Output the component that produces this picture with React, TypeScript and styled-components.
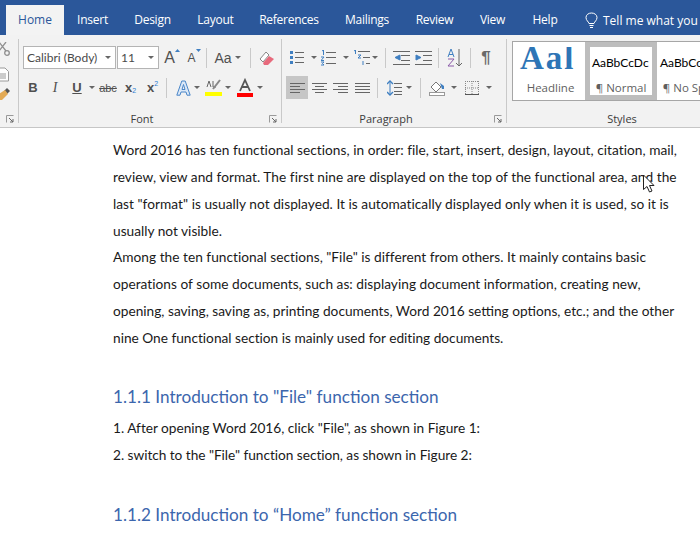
import React from "react";
import styled, { createGlobalStyle } from "styled-components";

const Global = createGlobalStyle`
  html, body { margin: 0; padding: 0; background: #fff; }
  body { width: 700px; height: 540px; overflow: hidden; font-family: "Open Sans", "Liberation Sans", sans-serif; }
`;

const Page = styled.div`
  position: relative; width: 700px; height: 540px; overflow: hidden; background: #fff;
`;
const TabBar = styled.div`
  display: flex; align-items: flex-end; height: 35px; background: #2b579a; padding-left: 6px; box-sizing: border-box;
`;
const Tab = styled.div<{ $active?: boolean; $w: number }>`
  flex: none; width: ${p => p.$w}px; height: 30px; line-height: 30px; text-align: center; white-space: nowrap;
  font-size: 12px; letter-spacing: ${p => (p.$active ? 0 : -0.25)}px; color: ${p => (p.$active ? "#2b579a" : "#fff")};
  background: ${p => (p.$active ? "#f3f3f3" : "transparent")};
`;
const TellMe = styled.div`
  flex: none; display: flex; align-items: center; gap: 5px; height: 30px; margin-left: 14px;
  font-size: 12px; color: #fff; white-space: nowrap;
`;
const Ribbon = styled.div`
  display: flex; height: 93px; background: #f2f2f2; border-bottom: 1px solid #c6c6c6; box-sizing: border-box; overflow: hidden;
`;
const Group = styled.div<{ $w: number; $last?: boolean; $pt?: number }>`
  position: relative; flex: none; display: flex; flex-direction: column; box-sizing: border-box;
  width: ${p => p.$w}px; margin: 4px 0; padding-top: ${p => p.$pt ?? 7}px; height: 84px;
  border-right: ${p => (p.$last ? "none" : "1px solid #c9c9c9")};
`;
const Row = styled.div<{ $h: number; $mt?: number }>`
  display: flex; align-items: center; height: ${p => p.$h}px; margin-top: ${p => p.$mt ?? 0}px;
`;
const GroupLabel = styled.div`
  position: absolute; left: 0; right: 16px; bottom: -3px; text-align: center; font-size: 11px; line-height: 15px; color: #3c3c3c;
`;
const Launcher = styled.svg`
  position: absolute; right: 4px; bottom: 0; width: 8px; height: 8px;
`;
const Combo = styled.div<{ $w: number; $ml: number }>`
  flex: none; position: relative; box-sizing: border-box; width: ${p => p.$w}px; height: 23px; margin-left: ${p => p.$ml}px;
  background: #fff; border: 1px solid #b4b4b4; font-family: "Lato", sans-serif; font-size: 12px; line-height: 21px;
  color: #4a4a4a; padding-left: 3px; white-space: nowrap;
`;
const ComboCaret = styled.span`
  position: absolute; right: 4px; top: 9px; width: 0; height: 0;
  border-left: 3px solid transparent; border-right: 3px solid transparent; border-top: 3px solid #666;
`;
const Tool = styled.div<{ $w: number; $ml?: number; $on?: boolean; $f?: string; $s?: number; $b?: boolean; $i?: boolean; $c?: string }>`
  flex: none; display: flex; align-items: center; justify-content: center; height: 23px;
  width: ${p => p.$w}px; margin-left: ${p => p.$ml ?? 0}px;
  background: ${p => (p.$on ? "#c6c6c6" : "transparent")};
  font-family: ${p => p.$f ?? '"Liberation Sans", sans-serif'}; font-size: ${p => p.$s ?? 12}px;
  font-weight: ${p => (p.$b ? 700 : 400)}; font-style: ${p => (p.$i ? "italic" : "normal")};
  color: ${p => p.$c ?? "#505050"}; white-space: nowrap; position: relative;
`;
const Under = styled.span`text-decoration: underline;`;
const Strike = styled.span`text-decoration: line-through;`;
const Script = styled.span<{ $up?: boolean }>`
  font-size: 7px; color: #2b7cd3; font-weight: 400; position: relative; top: ${p => (p.$up ? -4 : 3)}px;
`;
const SizeArrow = styled.svg`
  flex: none; width: 5px; height: 3px; margin-top: -14px;
`;
const Caret = styled.span<{ $ml: number }>`
  flex: none; width: 0; height: 0; margin-left: ${p => p.$ml}px;
  border-left: 3px solid transparent; border-right: 3px solid transparent; border-top: 3px solid #666;
`;
const Sep = styled.span<{ $ml: number }>`
  flex: none; width: 1px; height: 20px; background: #c9c9c9; margin-left: ${p => p.$ml}px;
`;
const Gallery = styled.div`
  display: flex; box-sizing: border-box; height: 60px; width: 230px; margin: 0 0 0 5px; padding-left: 3px;
  background: #fff; border: 1px solid #a6a6a6;
`;
const StyleCard = styled.div<{ $on?: boolean; $w: number }>`
  flex: none; display: flex; flex-direction: column; align-items: center; box-sizing: border-box; overflow: hidden;
  width: ${p => p.$w}px; margin-right: ${p => (p.$on ? 1 : 0)}px; height: 58px; padding-top: ${p => (p.$on ? 0 : 5)}px;
  border: ${p => (p.$on ? "5px solid #bdbdbd" : "none")};
`;
const Sample = styled.div<{ $big?: boolean }>`
  flex: none; height: 33px; line-height: ${p => (p.$big ? 22 : 32)}px; white-space: nowrap; overflow: hidden;
  width: ${p => (p.$big ? "62px" : "100%")}; align-self: flex-start; text-align: left;
  padding-left: ${p => (p.$big ? 4 : 2)}px; box-sizing: border-box;
  font-family: ${p => (p.$big ? '"Liberation Serif", serif' : '"Lato", sans-serif')};
  font-size: ${p => (p.$big ? 33 : 12)}px; font-weight: ${p => (p.$big ? 700 : 400)}; color: ${p => (p.$big ? "#2e75b6" : "#000")};
  letter-spacing: ${p => (p.$big ? 2 : 0)}px;
`;
const SampleName = styled.div`
  font-size: 11.5px; line-height: 16px; color: #5f5f5f; white-space: nowrap; font-family: "Open Sans", sans-serif;
`;
const Doc = styled.div`
  padding: 0 0 0 113px; font-family: "Lato", "Liberation Sans", sans-serif; color: #1a1a1a;
`;
const DocTop = styled.div`height: 9px;`;
const Line = styled.div<{ $w?: number }>`
  height: 26.85px; line-height: 26.85px; white-space: nowrap; font-size: 13.7px; letter-spacing: ${p => p.$w ?? 0.02}px;
`;
const Heading = styled.div<{ $mt: number }>`
  margin-top: ${p => p.$mt}px; height: 33px; line-height: 30px; font-size: 17.15px; color: #3c66ad; white-space: nowrap;
`;
const Pointer = styled.svg`
  position: absolute; left: 642px; top: 174px; width: 14px; height: 20px;
`;

const Ic: React.FC<{ w: number; h: number; children: React.ReactNode }> = ({ w, h, children }) => (
  <svg width={w} height={h} viewBox={`0 0 ${w} ${h}`} fill="none">{children}</svg>
);
const G = "#666666", B = "#3f7fc1";

const lines = (ys: number[], x1: number, x2: number, c = G) =>
  ys.map(y => <path key={y} d={`M${x1} ${y + 0.5}H${x2}`} stroke={c} />);

const launcher = (
  <Launcher viewBox="0 0 8 8" fill="none">
    <path d="M0.5 7.5V0.5H7.5" stroke="#9a9a9a" />
    <path d="M3 3L7 7M4 7H7V4" stroke="#666" />
  </Launcher>
);

const para1: [string, number][] = [
  ["Word 2016 has ten functional sections, in order: file, start, insert, design, layout, citation, mail,", 0.03],
  ["review, view and format. The first nine are displayed on the top of the functional area, and the", 0.03],
  ['last "format" is usually not displayed. It is automatically displayed only when it is used, so it is', 0.03],
  ["usually not visible.", 0],
  ['Among the ten functional sections, "File" is different from others. It mainly contains basic', 0.02],
  ["operations of some documents, such as: displaying document information, creating new,", 0.02],
  ["opening, saving, saving as, printing documents, Word 2016 setting options, etc.; and the other", 0],
  ["nine One functional section is mainly used for editing documents.", -0.01],
];

export default function App() {
  return (
    <Page>
      <Global />
      <TabBar>
        <Tab $active $w={58}>Home</Tab>
        <Tab $w={57}>Insert</Tab>
        <Tab $w={63}>Design</Tab>
        <Tab $w={63}>Layout</Tab>
        <Tab $w={84}>References</Tab>
        <Tab $w={72}>Mailings</Tab>
        <Tab $w={63}>Review</Tab>
        <Tab $w={53}>View</Tab>
        <Tab $w={52}>Help</Tab>
        <TellMe>
          <svg width="13" height="17" viewBox="0 0 13 17" fill="none" stroke="#fff">
            <path d="M4 11.5C3.5 9.5 1 8.5 1 5.5C1 2.8 3.5 1 6.5 1S12 2.8 12 5.5C12 8.5 9.5 9.5 9 11.5Z" />
            <path d="M4.5 13.5H8.5M5 15.5H8" />
          </svg>
          Tell me what you want to do
        </TellMe>
      </TabBar>
      <Ribbon>
        <Group $w={19} $pt={3}>
          <Row $h={16}>
            <Ic w={12} h={16}>
              <path d="M-1 0L6 9M6 0L-1 9" stroke="#8f8f8f" strokeWidth="1.3" />
              <circle cx="7" cy="11" r="2.3" stroke="#8f8f8f" strokeWidth="1.3" />
            </Ic>
          </Row>
          <Row $h={15} $mt={9}>
            <Ic w={12} h={15}>
              <path d="M-2 1H5L8.5 4.5V14H-2Z" fill="#fff" stroke="#9a9a9a" />
              <path d="M0 7H6M0 9H6M0 11H6" stroke="#9a9a9a" />
            </Ic>
          </Row>
          <Row $h={15} $mt={5}>
            <Ic w={12} h={15}>
              <path d="M7 1L10 4L7 7L4 4Z" fill="#555" />
              <path d="M-1 7L5 3L8 7L2 13H-1Z" fill="#e3aa55" />
            </Ic>
          </Row>
          {launcher}
        </Group>
        <Group $w={263}>
          <Row $h={23}>
            <Combo $w={93} $ml={4}>Calibri (Body)<ComboCaret /></Combo>
            <Combo $w={42} $ml={1}>11<ComboCaret /></Combo>
            <Tool $w={16} $ml={5} $s={16}>A<SizeArrow viewBox="0 0 5 3"><path d="M0 3L2.5 0L5 3Z" fill={B} /></SizeArrow></Tool>
            <Tool $w={14} $ml={7} $s={12}>A<SizeArrow viewBox="0 0 5 3"><path d="M0 0L2.5 3L5 0Z" fill={B} /></SizeArrow></Tool>
            <Sep $ml={5} />
            <Tool $w={18} $ml={7} $s={14}>Aa</Tool>
            <Caret $ml={3} />
            <Sep $ml={9} />
            <Tool $w={18} $ml={7}>
              <Ic w={16} h={16}>
                <path d="M1 9L7 2L10 5L4 12Z" fill="#fff" stroke="#888" />
                <path d="M4 13L10 6L15 9L9 15H5Z" fill="#e76a7c" />
              </Ic>
            </Tool>
          </Row>
          <Row $h={23} $mt={7}>
            <Tool $w={12} $ml={8} $b $s={13}>B</Tool>
            <Tool $w={12} $ml={10} $i $f='"Liberation Serif", serif' $s={14}>I</Tool>
            <Tool $w={12} $ml={10} $b $s={13}><Under>U</Under></Tool>
            <Caret $ml={6} />
            <Tool $w={18} $ml={4} $s={11}><Strike>abc</Strike></Tool>
            <Tool $w={15} $ml={6} $b $s={13}>x<Script>2</Script></Tool>
            <Tool $w={15} $ml={7} $b $s={13}>x<Script $up>2</Script></Tool>
            <Sep $ml={6} />
            <Tool $w={16} $ml={8}>
              <Ic w={15} h={16}>
                <path d="M0.8 15.2L5.8 1H9.2L14.2 15.2H11L10 12H5L4 15.2ZM6 9.5H9L7.5 4.5Z" fill="#dbe8f7" stroke="#4a86c8" fillRule="evenodd" />
              </Ic>
            </Tool>
            <Caret $ml={3} />
            <Tool $w={18} $ml={4}>
              <Ic w={17} h={19}>
                <path d="M2 9L4 3L6 9M8 3V9H11" stroke="#666" />
                <path d="M8 11L15 2" stroke="#888" strokeWidth="2" />
                <rect y="14" width="17" height="4" fill="#ffff00" />
              </Ic>
            </Tool>
            <Caret $ml={3} />
            <Tool $w={18} $ml={5}>
              <Ic w={16} h={19}>
                <path d="M3 13L8 2L13 13M5 9H11" stroke="#555" strokeWidth="1.8" />
                <rect y="15" width="16" height="4" fill="#ff0000" />
              </Ic>
            </Tool>
            <Caret $ml={3} />
          </Row>
          <GroupLabel>Font</GroupLabel>
          {launcher}
        </Group>
        <Group $w={225}>
          <Row $h={23}>
            <Tool $w={14} $ml={8}>
              <Ic w={14} h={15}>
                <rect x="0" y="1" width="3" height="3" fill={B} /><rect x="0" y="6" width="3" height="3" fill={B} /><rect x="0" y="11" width="3" height="3" fill={B} />
                {lines([2, 7, 12], 5, 14)}
              </Ic>
            </Tool>
            <Caret $ml={7} />
            <Tool $w={16} $ml={4}>
              <Ic w={16} h={16}>
                <path d="M1 1L2.5 0V5M0 7H3L0 10.5H3M0 12H3L1.5 13.5L3 15H0" stroke={B} />
                {lines([2, 7, 13], 5, 15)}
              </Ic>
            </Tool>
            <Caret $ml={6} />
            <Tool $w={18} $ml={4}>
              <Ic w={18} h={16}>
                <path d="M1 1L2.5 0V4" stroke={B} />
                <path d="M5 5H8L5 8H8M10 11V15" stroke={B} />
                {lines([1], 5, 17)}
                {lines([7], 10, 17)}
                {lines([13], 13, 17)}
              </Ic>
            </Tool>
            <Caret $ml={1} />
            <Sep $ml={7} />
            <Tool $w={17} $ml={7}>
              <Ic w={17} h={14}>
                {lines([0, 13], 0, 17)}{lines([4, 9], 8, 17)}
                <path d="M7 4L2 6.5L7 9Z" fill={B} stroke={B} />
              </Ic>
            </Tool>
            <Tool $w={17} $ml={5}>
              <Ic w={17} h={14}>
                {lines([0, 13], 0, 17)}{lines([4, 9], 8, 17)}
                <path d="M1 4L6 6.5L1 9Z" fill={B} stroke={B} />
              </Ic>
            </Tool>
            <Sep $ml={6} />
            <Tool $w={16} $ml={8}>
              <Ic w={16} h={20}>
                <path d="M1 9L4 1L7 9M2 6.5H6" stroke={B} />
                <path d="M1 11H7L1 18H7" stroke="#8a5aa8" />
                <path d="M12 1V18M9 15L12 18L15 15" stroke={G} />
              </Ic>
            </Tool>
            <Sep $ml={7} />
            <Tool $w={12} $ml={9} $s={17} $b $c="#6a6a6a">¶</Tool>
          </Row>
          <Row $h={23} $mt={7}>
            <Tool $w={22} $ml={4} $on><Ic w={15} h={12}>{lines([1, 7], 0, 15)}{lines([4, 10], 0, 10)}</Ic></Tool>
            <Tool $w={15} $ml={4}><Ic w={15} h={12}>{lines([1, 7], 0, 15)}{lines([4, 10], 3, 12)}</Ic></Tool>
            <Tool $w={15} $ml={6}><Ic w={15} h={12}>{lines([1, 7], 0, 15)}{lines([4, 10], 5, 15)}</Ic></Tool>
            <Tool $w={15} $ml={7}><Ic w={15} h={12}>{lines([1, 4, 7, 10], 0, 15)}</Ic></Tool>
            <Sep $ml={7} />
            <Tool $w={15} $ml={9}>
              <Ic w={15} h={16}>
                <path d="M3 2V14" stroke={B} />
                <path d="M0 4L3 1L6 4M0 12L3 15L6 12" stroke={B} strokeWidth="1.4" />
                {lines([3, 7, 11, 14], 7, 15)}
              </Ic>
            </Tool>
            <Caret $ml={4} />
            <Sep $ml={8} />
            <Tool $w={16} $ml={8}>
              <Ic w={16} h={16}>
                <path d="M2 7L7 2L12 7L7 12Z" fill="#fff" stroke="#777" />
                <path d="M11 3L15 6V9H13Z" fill={B} />
                <rect x="0.5" y="12.5" width="15" height="3" fill="#fff" stroke="#999" />
              </Ic>
            </Tool>
            <Caret $ml={6} />
            <Tool $w={14} $ml={8}>
              <Ic w={14} h={14}>
                <path d="M0.5 0V14M13.5 0V14M0 0.5H14M7 0V14M0 7H14" stroke="#888" strokeDasharray="1 1" />
                <path d="M0 13.5H14" stroke="#555" />
              </Ic>
            </Tool>
            <Caret $ml={7} />
          </Row>
          <GroupLabel>Paragraph</GroupLabel>
          {launcher}
        </Group>
        <Group $w={246} $last $pt={2}>
          <Gallery>
            <StyleCard $w={69}>
              <Sample $big>Aal</Sample>
              <SampleName>Headline</SampleName>
            </StyleCard>
            <StyleCard $on $w={72}>
              <Sample>AaBbCcDc</Sample>
              <SampleName>¶ Normal</SampleName>
            </StyleCard>
            <StyleCard $w={80}>
              <Sample>AaBbCcDc</Sample>
              <SampleName>¶ No Spacing</SampleName>
            </StyleCard>
          </Gallery>
          <GroupLabel>Styles</GroupLabel>
        </Group>
      </Ribbon>
      <Doc>
        <DocTop />
        {para1.map(([l, w]) => <Line key={l} $w={w}>{l}</Line>)}
        <Heading $mt={30}>1.1.1 Introduction to "File" function section</Heading>
        <Line $w={-0.02}>1. After opening Word 2016, click "File", as shown in Figure 1:</Line>
        <Line $w={-0.04}>2. switch to the "File" function section, as shown in Figure 2:</Line>
        <Heading $mt={32}>1.1.2 Introduction to “Home” function section</Heading>
      </Doc>
      <Pointer viewBox="0 0 14 20">
        <path d="M1.5 1V15.5L5 12.5L7.5 18L10 17L7.5 11.5H12Z" fill="#fff" stroke="#222" />
      </Pointer>
    </Page>
  );
}
